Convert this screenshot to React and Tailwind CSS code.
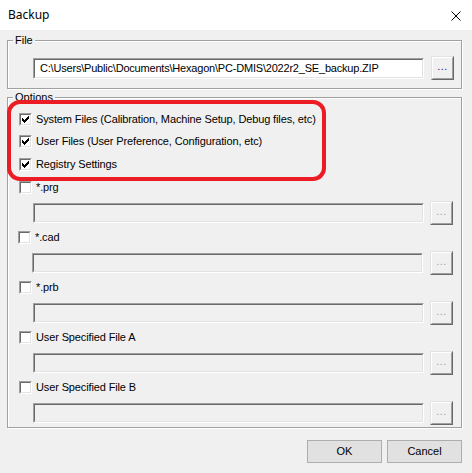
import React from "react";

const FONT = { fontFamily: '"Liberation Sans", Arial, sans-serif' };

// Classic sunken 2px edge used by edit boxes and check boxes
function Sunken({ className = "", inner = "bg-white", children }) {
  return (
    <div
      className={`border border-t-[#a0a0a0] border-l-[#a0a0a0] border-b-white border-r-white ${className}`}
    >
      <div
        className={`h-full w-full border border-t-[#696969] border-l-[#696969] border-b-[#e3e3e3] border-r-[#e3e3e3] ${inner}`}
      >
        {children}
      </div>
    </div>
  );
}

// Classic raised 2px edge for the small browse buttons
function BrowseButton({ disabled = false, className = "" }) {
  return (
    <div
      className={`h-[24px] w-[23px] border border-t-[#e3e3e3] border-l-[#e3e3e3] border-b-[#696969] border-r-[#696969] ${className}`}
    >
      <div className="flex h-full w-full items-center justify-center border border-t-white border-l-white border-b-[#a0a0a0] border-r-[#a0a0a0] bg-[#f0f0f0]">
        <span
          className={`pb-[3px] text-[11px] leading-none tracking-[0.5px] ${
            disabled ? "text-[#a0a0a0]" : "text-[#1a1a6a]"
          }`}
        >
          ...
        </span>
      </div>
    </div>
  );
}

function CheckMark() {
  return (
    <svg width="7" height="7" viewBox="0 0 7 7" shapeRendering="crispEdges">
      <polygon
        fill="#000"
        points="0,2 1,2 1,3 2,3 2,4 3,4 3,3 4,3 4,2 5,2 5,1 6,1 6,0 7,0 7,3 6,3 6,4 5,4 5,5 4,5 4,6 3,6 3,7 2,7 2,6 1,6 1,5 0,5"
      />
    </svg>
  );
}

function CheckRow({ label, checked = false, className = "" }) {
  return (
    <div className={`flex h-[13px] items-center ${className}`}>
      <Sunken className="h-[13px] w-[13px] shrink-0">
        <div className="flex h-full w-full items-start justify-start pl-[1px] pt-[1px]">
          {checked && <CheckMark />}
        </div>
      </Sunken>
      <span className="ml-[4px] whitespace-nowrap text-[11px] leading-none tracking-[-0.13px] text-black">
        {label}
      </span>
    </div>
  );
}

function PathRow({ className = "", shift = "" }) {
  return (
    <div className={`flex items-center ${className}`}>
      <Sunken className={`h-[20px] w-[391px] ${shift}`} inner="bg-[#f0f0f0]" />
      <BrowseButton disabled className="ml-[6px]" />
    </div>
  );
}

function GroupBox({ title, className = "", children }) {
  return (
    <div
      className={`relative ml-[7px] w-[455px] border border-[#a0a0a0] shadow-[inset_1px_1px_0_#fff,1px_1px_0_#fff] ${className}`}
    >
      <span className="absolute left-[5px] top-[-7px] bg-[#f0f0f0] px-[2px] text-[11px] leading-[13px] text-black">
        {title}
      </span>
      {children}
    </div>
  );
}

const fileSections = [
  { label: "*.prg" },
  { label: "*.cad", shift: true },
  { label: "*.prb" },
  { label: "User Specified File A" },
  { label: "User Specified File B" },
];

export default function App() {
  return (
    <div
      className="relative flex h-[473px] w-[472px] flex-col overflow-hidden bg-[#f0f0f0]"
      style={FONT}
    >
      {/* title bar */}
      <div className="flex h-[30px] shrink-0 items-center justify-between bg-white pl-[8px] pr-[11px]">
        <span
          className="text-[12px] leading-none text-black"
          style={{ fontFamily: '"Noto Sans", "Open Sans", sans-serif' }}
        >
          Backup
        </span>
        <svg width="10" height="10" viewBox="0 0 10 10" className="mt-[1px]">
          <path d="M0.5 0.5 L9.5 9.5 M9.5 0.5 L0.5 9.5" stroke="#000" strokeWidth="1" />
        </svg>
      </div>

      {/* File */}
      <GroupBox title="File" className="mt-[10px] h-[49px]">
        <div className="flex items-center pl-[25px] pt-[15px]">
          <Sunken className="h-[21px] w-[391px]">
            <div className="flex h-full items-center pl-[5px] text-[11px] leading-none tracking-[-0.2px] text-black whitespace-nowrap">
              C:\Users\Public\Documents\Hexagon\PC-DMIS\2022r2_SE_backup.ZIP
            </div>
          </Sunken>
          <BrowseButton className="ml-[7px] h-[23px] w-[23px]" />
        </div>
      </GroupBox>

      {/* Options */}
      <GroupBox title="Options" className="mt-[8px] h-[331px]">
        <div className="flex flex-col pl-[11px] pt-[15px]">
          <CheckRow checked label="System Files (Calibration, Machine Setup, Debug files, etc)" />
          <CheckRow checked className="mt-[9px]" label="User Files (User Preference, Configuration, etc)" />
          <CheckRow checked className="mt-[10px]" label="Registry Settings" />

          {fileSections.map((s, i) => (
            <div key={s.label} className={i === 0 ? "mt-[10px]" : "mt-[6px]"}>
              <CheckRow label={s.label} className={s.shift ? "-ml-[1px]" : ""} />
              <PathRow className="ml-[14px] mt-[7px]" shift={s.shift ? "-ml-[1px] mr-[1px]" : ""} />
            </div>
          ))}
        </div>
      </GroupBox>

      {/* dialog buttons */}
      <div className="mt-[12px] flex justify-end gap-[5px] pr-[10px]">
        {["OK", "Cancel"].map((t) => (
          <button
            key={t}
            className="flex h-[23px] w-[75px] items-center justify-center border border-[#adadad] bg-[#e1e1e1] text-[11px] leading-none text-black"
          >
            {t}
          </button>
        ))}
      </div>

      {/* highlight drawn around the first three options */}
      <div className="pointer-events-none absolute left-[7px] top-[100px] h-[81px] w-[319px] rounded-[13px] border-[4px] border-[#ec1c24]" />
    </div>
  );
}
